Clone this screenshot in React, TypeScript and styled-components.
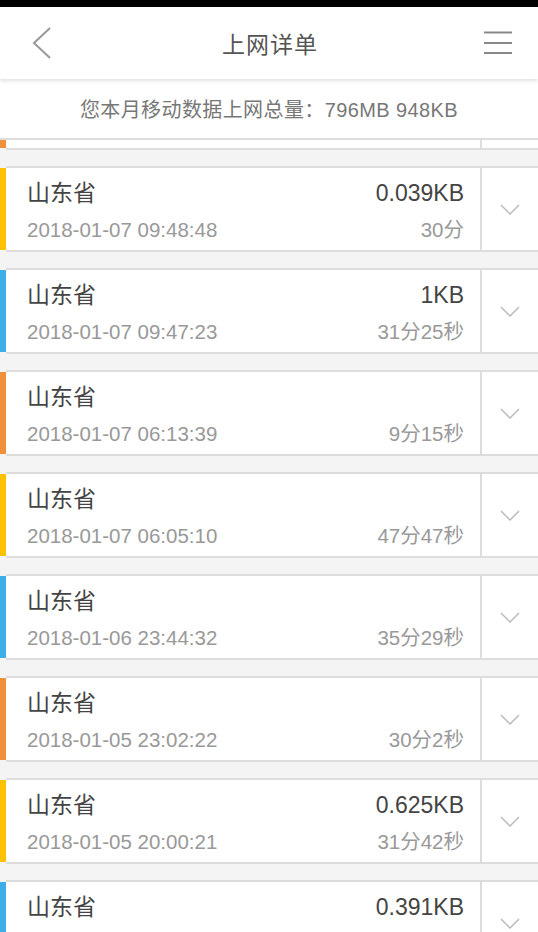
import React from 'react';
import styled, {createGlobalStyle} from 'styled-components';

const GlobalStyle = createGlobalStyle`
  html, body {margin: 0;padding: 0;height: 100%;}
  body {background: #f4f4f4;font-family: "Liberation Sans", "Noto Sans CJK SC", sans-serif;}
  #root {height: 100vh;overflow: hidden;}
`;

const Page = styled.div`
  display: flex;flex-direction: column;height: 100vh;overflow: hidden;background: #f4f4f4;
`;
const StatusBar = styled.div`
  height: 7px;background: #000;flex-shrink: 0;
`;
const Header = styled.div`
  position: relative;z-index: 2;
  display: flex;justify-content: space-between;align-items: center;
  height: 72px;padding: 0 24px 0 26px;background: #fff;flex-shrink: 0;
  box-shadow: 0 2px 4px rgba(0,0,0,0.12);
`;
const Title = styled.div`
  font-size: 23px;color: #555;letter-spacing: 1px;
`;
const IconButton = styled.div`
  display: flex;align-items: center;justify-content: center;width: 32px;height: 40px;
`;
const Summary = styled.div`
  display: flex;align-items: center;justify-content: center;
  height: 59px;background: #fff;flex-shrink: 0;
  font-size: 20px;color: #777;letter-spacing: 0.4px;
`;
const List = styled.div`
  flex: 1;overflow: hidden;border-top: 2px solid #ddd;
`;
const Track = styled.div`
  display: flex;flex-direction: column;gap: 16px;margin-top: -76px;
`;
const Row = styled.div`
  display: flex;
`;
const Bar = styled.div<{$color: string}>`
  width: 6px;margin: 2px 0;background: ${p => p.$color};flex-shrink: 0;
`;
const Card = styled.div`
  flex: 1;display: flex;height: 82px;background: #fff;
  border-top: 2px solid #ddd;border-bottom: 2px solid #ddd;
`;
const Info = styled.div`
  flex: 1;display: flex;flex-direction: column;justify-content: space-between;
  padding: 11px 16px 8px 21px;
`;
const Line = styled.div`
  display: flex;justify-content: space-between;align-items: center;
`;
const Name = styled.span`
  font-size: 23px;line-height: 28px;color: #444;
`;
const Amount = styled.span`
  font-size: 23px;line-height: 28px;color: #444;
`;
const Meta = styled.span`
  font-size: 20.5px;line-height: 24px;color: #999;
`;
const Toggle = styled.div`
  width: 56px;flex-shrink: 0;border-left: 2px solid #ddd;
  display: flex;align-items: center;justify-content: center;
`;

const YELLOW = '#fcc104';
const BLUE = '#3daeea';
const ORANGE = '#f0903b';

type Record = {color: string; amount?: string; time: string; duration: string};

const records: Record[] = [
  {color: ORANGE, time: '2018-01-07 09:50:12', duration: '12分'},
  {color: YELLOW, amount: '0.039KB', time: '2018-01-07 09:48:48', duration: '30分'},
  {color: BLUE, amount: '1KB', time: '2018-01-07 09:47:23', duration: '31分25秒'},
  {color: ORANGE, time: '2018-01-07 06:13:39', duration: '9分15秒'},
  {color: YELLOW, time: '2018-01-07 06:05:10', duration: '47分47秒'},
  {color: BLUE, time: '2018-01-06 23:44:32', duration: '35分29秒'},
  {color: ORANGE, time: '2018-01-05 23:02:22', duration: '30分2秒'},
  {color: YELLOW, amount: '0.625KB', time: '2018-01-05 20:00:21', duration: '31分42秒'},
  {color: BLUE, amount: '0.391KB', time: '2018-01-05 19:12:05', duration: '28分10秒'},
];

const BackIcon = () => (
  <svg width="22" height="32" viewBox="0 0 22 32">
    <polyline points="19,1 3,16 19,31" fill="none" stroke="#999" strokeWidth="2"/>
  </svg>
);
const MenuIcon = () => (
  <svg width="30" height="24" viewBox="0 0 30 24">
    <g stroke="#888" strokeWidth="2">
      <line x1="1" y1="1.5" x2="29" y2="1.5"/>
      <line x1="1" y1="12" x2="29" y2="12"/>
      <line x1="1" y1="22" x2="29" y2="22"/>
    </g>
  </svg>
);
const Chevron = () => (
  <svg width="20" height="11" viewBox="0 0 20 11">
    <polyline points="1,1 10,10 19,1" fill="none" stroke="#bbb" strokeWidth="1.5"/>
  </svg>
);

export default function App() {
  return (
    <Page>
      <GlobalStyle/>
      <StatusBar/>
      <Header>
        <IconButton><BackIcon/></IconButton>
        <Title>上网详单</Title>
        <IconButton><MenuIcon/></IconButton>
      </Header>
      <Summary>您本月移动数据上网总量：796MB 948KB</Summary>
      <List>
        <Track>
          {records.map((r, i) => (
            <Row key={i}>
              <Bar $color={r.color}/>
              <Card>
                <Info>
                  <Line>
                    <Name>山东省</Name>
                    {r.amount && <Amount>{r.amount}</Amount>}
                  </Line>
                  <Line>
                    <Meta>{r.time}</Meta>
                    <Meta>{r.duration}</Meta>
                  </Line>
                </Info>
                <Toggle><Chevron/></Toggle>
              </Card>
            </Row>
          ))}
        </Track>
      </List>
    </Page>
  );
}
